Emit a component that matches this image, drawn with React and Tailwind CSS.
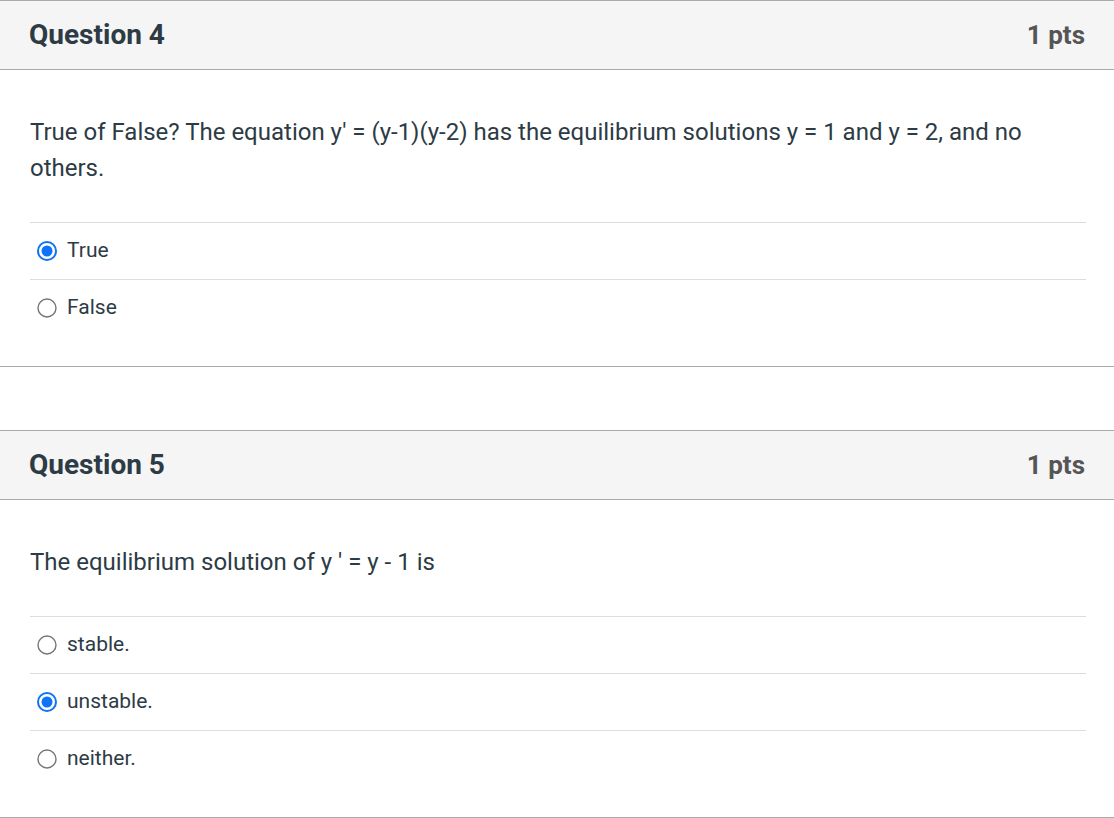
import React from "react";

function Radio({ checked }) {
  return checked ? (
    <svg width="20" height="20" viewBox="0 0 20 20" className="shrink-0">
      <circle cx="10" cy="10" r="9" fill="white" stroke="#0f74f3" strokeWidth="2" />
      <circle cx="10" cy="10" r="5.5" fill="#0f74f3" />
    </svg>
  ) : (
    <svg width="20" height="20" viewBox="0 0 20 20" className="shrink-0">
      <circle cx="10" cy="10" r="9" fill="white" stroke="#767676" strokeWidth="1.4" />
    </svg>
  );
}

function Question({ title, text, answers, className = "" }) {
  return (
    <div className={"border-y border-[#aaaaaa] bg-white " + className}>
      <div className="h-[69px] bg-[#f5f5f5] border-b border-[#aaaaaa] flex items-center justify-between pl-[29px] pr-[29px]">
        <div className="text-[28px] font-bold text-[#2d3b45]">{title}</div>
        <div className="text-[26px] font-bold text-[#555555]">1 pts</div>
      </div>
      <div className="pl-[30px] pr-[28px] pt-[44px] pb-[30px]">
        <div className="text-[24px] leading-[36px] text-[#2d3b45]">{text}</div>
        <div className="mt-[36px]">
          {answers.map((a) => (
            <div
              key={a.label}
              className="h-[57px] border-t border-[#dddddd] flex items-center pl-[7px] gap-[10px]"
            >
              <Radio checked={a.checked} />
              <span className="text-[21px] text-[#2d3b45]">{a.label}</span>
            </div>
          ))}
        </div>
      </div>
    </div>
  );
}

export default function App() {
  return (
    <div
      className="w-[1114px] min-h-[818px] bg-white overflow-hidden"
      style={{ fontFamily: "Roboto, 'Liberation Sans', sans-serif" }}
    >
      <Question
        title="Question 4"
        text="True of False? The equation y' = (y-1)(y-2) has the equilibrium solutions y = 1 and y = 2, and no others."
        answers={[
          { label: "True", checked: true },
          { label: "False", checked: false },
        ]}
      />
      <Question
        className="mt-[63px]"
        title="Question 5"
        text="The equilibrium solution of y ' = y - 1 is"
        answers={[
          { label: "stable.", checked: false },
          { label: "unstable.", checked: true },
          { label: "neither.", checked: false },
        ]}
      />
    </div>
  );
}
